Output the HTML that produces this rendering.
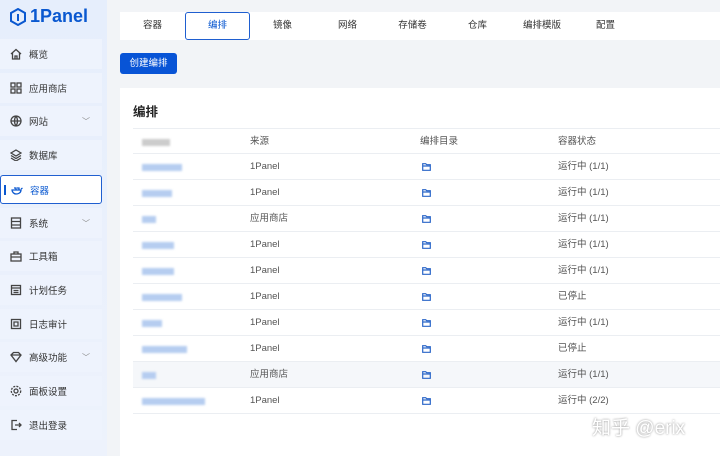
<!DOCTYPE html>
<html><head><meta charset="utf-8"><style>
*{margin:0;padding:0;box-sizing:border-box}
body{width:720px;height:456px;overflow:hidden;background:#f2f4f7;font-family:"Liberation Sans","Noto Sans CJK SC",sans-serif;font-size:10px;color:#333;position:relative}
.side{position:absolute;left:0;top:0;width:107px;height:456px;background:linear-gradient(180deg,#e6eefc,#edf2fc)}
.logo{position:absolute;left:10px;top:6px;font-size:18px;font-weight:bold;color:#0a58d0;display:flex;align-items:center;gap:4px}
.it{position:absolute;left:0;width:102px;height:30px;background:#eef3fd;display:flex;align-items:center;padding-left:10px;font-size:9.5px;color:#333}
.it svg{width:12px;height:12px;margin-right:7px;stroke:#444;fill:none;stroke-width:1.3}
.it .ch{position:absolute;left:82px;font-size:8px;color:#888}
.act{background:#fff;border:1.5px solid #1f5fd0;border-radius:3px;color:#0a58d0}
.act::before{content:"";position:absolute;left:3px;top:9px;width:2px;height:10px;background:#0a58d0}
.tabs{position:absolute;left:120px;top:12px;width:600px;height:28px;background:#fff}
.tab{position:absolute;top:0;height:28px;line-height:28px;text-align:center;font-size:9.5px;color:#333}
.tab.a{border:1.5px solid #1f5fd0;border-radius:3px;color:#0a58d0;line-height:25px}
.btn{position:absolute;left:120px;top:53px;width:57px;height:21px;background:#0854d6;color:#fff;border-radius:3px;font-size:9.5px;text-align:center;line-height:21px}
.card{position:absolute;left:120px;top:88px;width:600px;height:368px;background:#fff}
h3{position:absolute;left:13px;top:13px;font-size:12.5px;font-weight:bold;color:#222}
.row{position:absolute;left:13px;width:587px;height:26px;border-bottom:1px solid #ebeef2;font-size:9.5px;color:#555}
.row span{position:absolute;top:0;height:25px;line-height:25px}
.bl{position:absolute;left:9px;top:10px;height:7px;background:#b6cdf0;filter:blur(1px)}
.fd{position:absolute;left:289px;top:9px;width:9px;height:8px}
</style></head><body>
<div class="side">
<div class="logo"><svg width="16" height="18" viewBox="0 0 16 18"><path d="M8 1L15 5V13L8 17L1 13V5Z" fill="none" stroke="#0a58d0" stroke-width="2"/><path d="M7 6h2v7H7z" fill="#0a58d0"/></svg>1Panel</div>
<div class="it" style="top:39px"><svg viewBox="0 0 12 12"><path d="M1 6L6 1.5 11 6M2.5 5v6h7V5M5 11V8h2v3"/></svg>概览</div>
<div class="it" style="top:73px"><svg viewBox="0 0 12 12"><rect x="1" y="1" width="4" height="4"/><rect x="7" y="1" width="4" height="4"/><rect x="1" y="7" width="4" height="4"/><rect x="7" y="7" width="4" height="4"/></svg>应用商店</div>
<div class="it" style="top:106px"><svg viewBox="0 0 12 12"><circle cx="6" cy="6" r="5"/><path d="M1 6h10M6 1c-2 3-2 7 0 10M6 1c2 3 2 7 0 10"/></svg>网站<span class="ch">﹀</span></div>
<div class="it" style="top:140px"><svg viewBox="0 0 12 12"><path d="M6 1L11 4 6 7 1 4Z M1 6.5L6 9.5 11 6.5M1 9L6 12 11 9"/></svg>数据库</div>
<div class="it act" style="top:175px;height:29px"><svg viewBox="0 0 12 12" style="stroke:#0a58d0"><path d="M1 6h9c0 3-3 4-5 4S1 8 1 6ZM3 4h2v2M6 4h2v2M10 5l1.5-1"/></svg>容器</div>
<div class="it" style="top:208px"><svg viewBox="0 0 12 12"><rect x="1.5" y="1" width="9" height="10"/><path d="M1.5 4.5h9M1.5 8h9"/></svg>系统<span class="ch">﹀</span></div>
<div class="it" style="top:241px"><svg viewBox="0 0 12 12"><rect x="1" y="4" width="10" height="7"/><path d="M4 4V2h4v2M1 7h10"/></svg>工具箱</div>
<div class="it" style="top:275px"><svg viewBox="0 0 12 12"><rect x="1.5" y="1.5" width="9" height="9"/><path d="M1.5 4h9M3.5 6.5h5M3.5 8.5h5"/></svg>计划任务</div>
<div class="it" style="top:309px"><svg viewBox="0 0 12 12"><rect x="1.5" y="1.5" width="9" height="9"/><path d="M4 4h4v4H4z"/></svg>日志审计</div>
<div class="it" style="top:342px"><svg viewBox="0 0 12 12"><path d="M1 4L3.5 1.5h5L11 4 6 10.5Z M1 4h10"/></svg>高级功能<span class="ch">﹀</span></div>
<div class="it" style="top:376px"><svg viewBox="0 0 12 12"><circle cx="6" cy="6" r="2"/><circle cx="6" cy="6" r="4.7" stroke-dasharray="2 1.2"/></svg>面板设置</div>
<div class="it" style="top:410px"><svg viewBox="0 0 12 12"><path d="M7 1.5H2v9h5M5 6h6M9 4l2 2-2 2"/></svg>退出登录</div>
</div>
<div class="tabs">
<div class="tab" style="left:0;width:65px">容器</div>
<div class="tab a" style="left:65px;width:65px">编排</div>
<div class="tab" style="left:130px;width:65px">镜像</div>
<div class="tab" style="left:195px;width:65px">网络</div>
<div class="tab" style="left:260px;width:65px">存储卷</div>
<div class="tab" style="left:325px;width:65px">仓库</div>
<div class="tab" style="left:387px;width:70px">编排模版</div>
<div class="tab" style="left:453px;width:65px">配置</div>
</div>
<div class="btn">创建编排</div>
<svg width="0" height="0" style="position:absolute"><defs><symbol id="f" viewBox="0 0 9 8"><path d="M0.7 0.7h3l1 1h3.6v5.6H0.7Z M0.7 3h7.6" fill="none" stroke="#2a66c8" stroke-width="1.2"/></symbol></defs></svg>
<div class="card">
<h3>编排</h3>
<div class="row" style="top:40px;border-top:1px solid #ebeef2"><i class="bl" style="width:28px;background:#ccc"></i><span style="left:117px">来源</span><span style="left:287px">编排目录</span><span style="left:425px">容器状态</span></div>
<div class="row" style="top:66px"><i class="bl" style="width:40px"></i><span style="left:117px">1Panel</span><svg class="fd"><use href="#f"/></svg><span style="left:425px">运行中 (1/1)</span></div>
<div class="row" style="top:92px"><i class="bl" style="width:30px"></i><span style="left:117px">1Panel</span><svg class="fd"><use href="#f"/></svg><span style="left:425px">运行中 (1/1)</span></div>
<div class="row" style="top:118px"><i class="bl" style="width:14px"></i><span style="left:117px">应用商店</span><svg class="fd"><use href="#f"/></svg><span style="left:425px">运行中 (1/1)</span></div>
<div class="row" style="top:144px"><i class="bl" style="width:32px"></i><span style="left:117px">1Panel</span><svg class="fd"><use href="#f"/></svg><span style="left:425px">运行中 (1/1)</span></div>
<div class="row" style="top:170px"><i class="bl" style="width:32px"></i><span style="left:117px">1Panel</span><svg class="fd"><use href="#f"/></svg><span style="left:425px">运行中 (1/1)</span></div>
<div class="row" style="top:196px"><i class="bl" style="width:40px"></i><span style="left:117px">1Panel</span><svg class="fd"><use href="#f"/></svg><span style="left:425px">已停止</span></div>
<div class="row" style="top:222px"><i class="bl" style="width:20px"></i><span style="left:117px">1Panel</span><svg class="fd"><use href="#f"/></svg><span style="left:425px">运行中 (1/1)</span></div>
<div class="row" style="top:248px"><i class="bl" style="width:45px"></i><span style="left:117px">1Panel</span><svg class="fd"><use href="#f"/></svg><span style="left:425px">已停止</span></div>
<div class="row" style="top:274px;background:#f5f7fa"><i class="bl" style="width:14px"></i><span style="left:117px">应用商店</span><svg class="fd"><use href="#f"/></svg><span style="left:425px">运行中 (1/1)</span></div>
<div class="row" style="top:300px"><i class="bl" style="width:63px"></i><span style="left:117px">1Panel</span><svg class="fd"><use href="#f"/></svg><span style="left:425px">运行中 (2/2)</span></div>
</div>
<div style="position:absolute;left:592px;top:413px;font-size:19px;color:#fff;text-shadow:0 0 2px #888">知乎 @erix</div>
</body></html>
